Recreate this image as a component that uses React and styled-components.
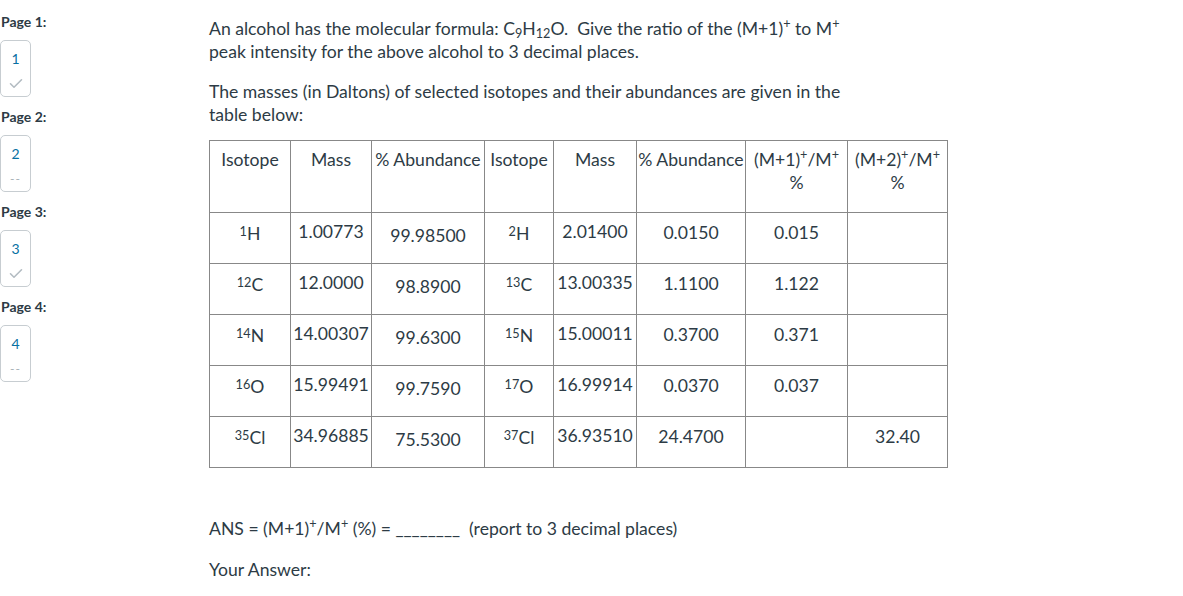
import React from 'react';
import styled, { createGlobalStyle } from 'styled-components';

const Global = createGlobalStyle`
  body {
    margin: 0;
    background: #fff;
    font-family: Lato, "Open Sans", "Liberation Sans", sans-serif;
    color: #2d3b45;
  }
`;

const Page = styled.div`
  display: grid;
  grid-template-columns: 209px 1fr;
  width: 1183px;
  height: 596px;
  overflow: hidden;
`;

const Sidebar = styled.div`
  display: flex;
  flex-direction: column;
  padding-top: 2px;
`;

const NavItem = styled.div`
  display: flex;
  flex-direction: column;
`;

const NavLabel = styled.div`
  font-size: 14px;
  font-weight: 700;
  line-height: 18px;
  margin: 11px 0 9px 1px;
  color: #2d3b45;
`;

const NavBox = styled.div`
  width: 29px;
  height: 45px;
  border: 1px solid #c7cdd1;
  border-radius: 5px;
  display: flex;
  flex-direction: column;
  align-items: center;
  padding-top: 10px;
`;

const NavNum = styled.div`
  font-size: 14px;
  line-height: 16px;
  color: #0770a3;
`;

const NavState = styled.div`
  margin-top: 10px;
  height: 12px;
  display: flex;
  align-items: center;
  color: #a5afb5;
  font-size: 12px;
  letter-spacing: 1px;
`;

const Main = styled.div`
  padding-top: 17px;
  font-size: 17.6px;
  line-height: 23px;
`;

const Para = styled.p`
  margin: 0 0 ${(p) => (p.$last ? 14 : 17)}px;
  width: 650px;
`;

const Sup = styled.sup`
  font-size: 0.72em;
  line-height: 0;
  vertical-align: ${(p) => (p.$low ? '0.35em' : '0.55em')};
`;

const Sub = styled.sub`
  font-size: 0.72em;
  line-height: 0;
  vertical-align: -0.25em;
`;

const Table = styled.table`
  border-collapse: collapse;
  table-layout: fixed;
  width: 738px;
  border: 1px solid #333;
  color: #2d3b45;
`;

const Col = styled.col`
  width: ${(p) => p.$w}px;
`;

const Th = styled.th`
  border: 1px solid #888;
  font-weight: 400;
  vertical-align: top;
  text-align: center;
  padding: 7px 0 0;
  height: 64px;
  line-height: 23px;
  white-space: nowrap;
`;

const Row = styled.tr`
  height: 51px;
`;

const Td = styled.td`
  border: 1px solid #888;
  text-align: center;
  vertical-align: middle;
  padding: 0 0 ${(p) => p.$pb}px;
  line-height: 24px;
  white-space: nowrap;
`;

const Answer = styled.p`
  margin: 49px 0 0;
  line-height: 23px;
`;

const YourAnswer = styled.p`
  margin: 18px 0 0;
  line-height: 23px;
`;

function Check() {
  return (
    <svg width="14" height="11" viewBox="0 0 14 11">
      <path d="M1.5 5.8 L5 9.2 L12.5 1.8" fill="none" stroke="#b3bcc2" strokeWidth="1.6" strokeLinecap="round" strokeLinejoin="round" />
    </svg>
  );
}

const pages = [
  { n: 1, done: true },
  { n: 2, done: false },
  { n: 3, done: true },
  { n: 4, done: false },
];

const iso = (mass, el) => (
  <>
    <Sup $low>{mass}</Sup>
    {el}
  </>
);

const rows = [
  [iso(1, 'H'), '1.00773', '99.98500', iso(2, 'H'), '2.01400', '0.0150', '0.015', ''],
  [iso(12, 'C'), '12.0000', '98.8900', iso(13, 'C'), '13.00335', '1.1100', '1.122', ''],
  [iso(14, 'N'), '14.00307', '99.6300', iso(15, 'N'), '15.00011', '0.3700', '0.371', ''],
  [iso(16, 'O'), '15.99491', '99.7590', iso(17, 'O'), '16.99914', '0.0370', '0.037', ''],
  [iso(35, 'Cl'), '34.96885', '75.5300', iso(37, 'Cl'), '36.93510', '24.4700', '', '32.40'],
];

const widths = [81, 81, 113, 69, 83, 109, 102, 100];
// bottom padding per column, shifts the text up like the original markup
const pads = [8, 12, 4, 8, 12, 10, 10, 10];

export default function App() {
  return (
    <>
      <Global />
      <Page>
        <Sidebar>
          {pages.map((p) => (
            <NavItem key={p.n}>
              <NavLabel>Page {p.n}:</NavLabel>
              <NavBox>
                <NavNum>{p.n}</NavNum>
                <NavState>{p.done ? <Check /> : '--'}</NavState>
              </NavBox>
            </NavItem>
          ))}
        </Sidebar>
        <Main>
          <Para>
            An alcohol has the molecular formula: C<Sub>9</Sub>H<Sub>12</Sub>O.&nbsp;&nbsp;Give the ratio of the (M+1)<Sup>+</Sup> to M<Sup>+</Sup> peak intensity for the above alcohol to 3 decimal places.
          </Para>
          <Para $last>
            The masses (in Daltons) of selected isotopes and their abundances are given in the table below:
          </Para>
          <Table>
            <colgroup>
              {widths.map((w, i) => (
                <Col key={i} $w={w} />
              ))}
            </colgroup>
            <thead>
              <tr>
                <Th>Isotope</Th>
                <Th>Mass</Th>
                <Th>% Abundance</Th>
                <Th>Isotope</Th>
                <Th>Mass</Th>
                <Th>% Abundance</Th>
                <Th>
                  (M+1)<Sup>+</Sup>/M<Sup>+</Sup>
                  <br />%
                </Th>
                <Th>
                  (M+2)<Sup>+</Sup>/M<Sup>+</Sup>
                  <br />%
                </Th>
              </tr>
            </thead>
            <tbody>
              {rows.map((r, i) => (
                <Row key={i}>
                  {r.map((c, j) => (
                    <Td key={j} $pb={pads[j]}>
                      {c}
                    </Td>
                  ))}
                </Row>
              ))}
            </tbody>
          </Table>
          <Answer>
            ANS = (M+1)<Sup>+</Sup>/M<Sup>+</Sup> (%) = ________&nbsp; (report to 3 decimal places)
          </Answer>
          <YourAnswer>Your Answer:</YourAnswer>
        </Main>
      </Page>
    </>
  );
}
